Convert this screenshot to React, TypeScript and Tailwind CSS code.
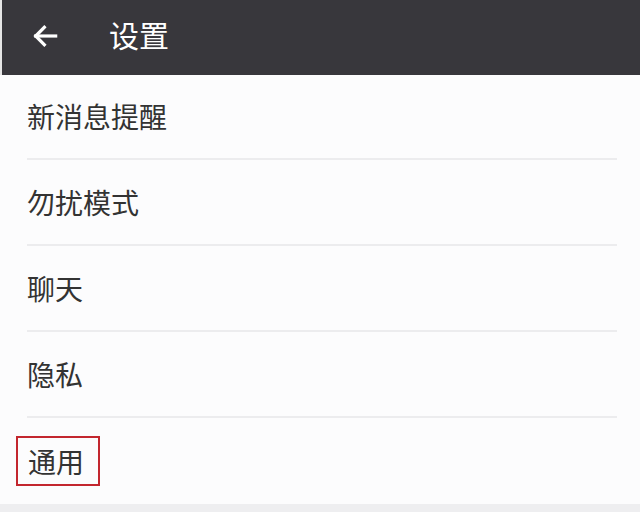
import { ReactNode } from "react";

const items = ["新消息提醒", "勿扰模式", "聊天", "隐私", "通用"];

function Row({ children, last }: { children: ReactNode; last?: boolean }) {
  return (
    <div
      className={`h-[86px] flex items-center ${last ? "" : "border-b-2 border-[#ececee]"}`}
    >
      {children}
    </div>
  );
}

export default function App() {
  return (
    <div
      className="w-[640px] h-[512px] overflow-hidden bg-[#fcfcfd] flex flex-col"
      style={{ fontFamily: '"Noto Sans CJK SC", "Noto Sans", sans-serif' }}
    >
      {/* 顶栏 */}
      <div className="h-[75px] shrink-0 bg-[#38373c] flex items-center border-l-2 border-[#e6e6e6]">
        <svg
          width="32"
          height="32"
          viewBox="0 0 24 24"
          className="ml-[27px] -mt-[4px]"
          fill="none"
          stroke="#ffffff"
          strokeWidth="2.4"
          strokeLinecap="square"
        >
          <path d="M20 12H5" />
          <path d="M11.5 5.5L5 12l6.5 6.5" />
        </svg>
        <span className="ml-[48px] -mt-[7px] text-white text-[30px] leading-none">设置</span>
      </div>

      {/* 列表 */}
      <div className="flex-1 pl-[27px] pr-[23px] -mt-[1px]">
        {items.map((t, i) =>
          i === items.length - 1 ? (
            <Row key={t} last>
              <span className="-ml-[11px] pl-[10px] pr-[14px] pt-[7px] pb-[7px] border-2 border-[#c3262e] text-[28px] leading-[32px] text-[#333333]">
                {t}
              </span>
            </Row>
          ) : (
            <Row key={t}>
              <span className="text-[28px] leading-none text-[#333333]">{t}</span>
            </Row>
          )
        )}
      </div>

      <div className="h-[9px] shrink-0 bg-[#eeeef0]" />
    </div>
  );
}
